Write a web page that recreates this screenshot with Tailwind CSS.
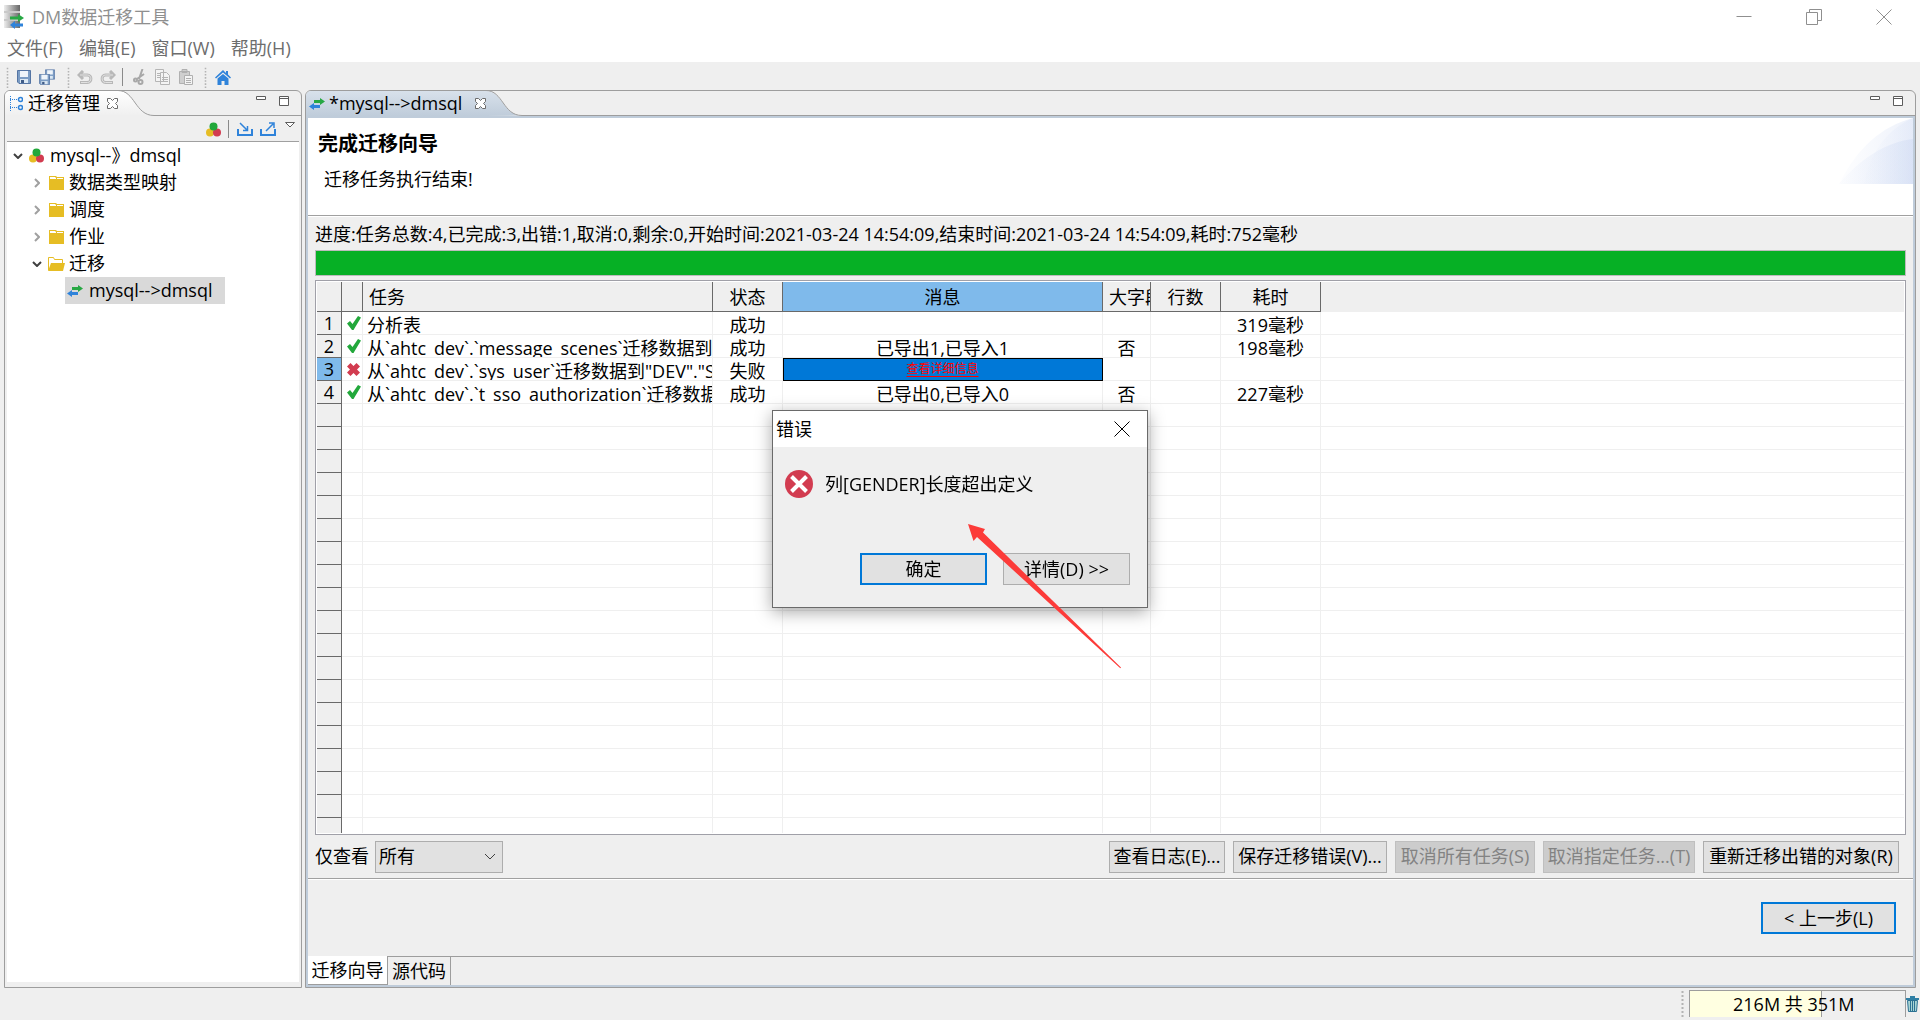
<!DOCTYPE html>
<html lang="zh-CN">
<head>
    <meta charset="UTF-8">
    <meta name="viewport" content="width=device-width, initial-scale=1.0">
    <title>DM数据迁移工具</title>
    <script src="https://cdn.jsdelivr.net/npm/@tailwindcss/browser@4"></script>
</head>
<body class="h-screen overflow-hidden flex flex-col bg-[#efefef] text-black text-[18px] leading-[27px] font-['Open_Sans','Noto_Sans_CJK_SC',sans-serif]">

    <!-- Shared icons -->
    <svg class="hidden" aria-hidden="true">
        <symbol id="i-swap" viewBox="0 0 16 12">
            <path d="M5 2h6V0l5 3.500-5 3.500V5H5z" fill="#27a844"/>
            <path d="M11 7H5V5L0 8.500 5 12v-2h6z" fill="#2f83da"/>
        </symbol>
        <symbol id="i-balls" viewBox="0 0 15 15">
            <circle cx="4" cy="10.500" r="4" fill="#e6bd24"/>
            <circle cx="11" cy="10.500" r="4" fill="#d23c50"/>
            <circle cx="7.500" cy="4.500" r="4" fill="#22a83b"/>
        </symbol>
        <symbol id="i-folder" viewBox="0 0 16 14">
            <path d="M0 0h7l1 1h7v13H0z" fill="#e6bd24"/>
            <path d="M1 1h5l1 1v1H1z" fill="#fff"/><path d="M8 2h6v1H8z" fill="#fff"/>
        </symbol>
        <symbol id="i-close" viewBox="0 0 11 11">
            <path d="M.5.500h3l2 2 2-2h3v3l-2 2 2 2v3h-3l-2-2-2 2h-3v-3l2-2-2-2z" fill="#fff" stroke="#6b6b6b"/>
        </symbol>
        <symbol id="i-min" viewBox="0 0 10 4"><path d="M.5.500h9v3h-9z" fill="#fff" stroke="#5c5c5c"/></symbol>
        <symbol id="i-max" viewBox="0 0 10 10"><path d="M.5.500h9v9h-9zM0 2.500h10" fill="#fff" stroke="#5c5c5c"/></symbol>
        <symbol id="i-ok" viewBox="0 0 14 14"><path d="M0 7.500 3 5l2.500 3L11 0l3 1.500L6.500 14H5z" fill="#22a83b"/></symbol>
        <symbol id="i-fail" viewBox="0 0 13 13"><path d="M3.500 0l3 3 3-3L13 3.500l-3 3 3 3L9.500 13l-3-3-3 3L0 9.500l3-3-3-3z" fill="#d23c50"/></symbol>
        <symbol id="i-x" viewBox="0 0 16 16"><path d="M.5.500l15 15M15.500.500l-15 15" fill="none" stroke="currentColor"/></symbol>
        <symbol id="i-right" viewBox="0 0 6 10"><path d="M1 1l4 4-4 4" fill="none" stroke="#a0a0a0" stroke-width="2"/></symbol>
        <symbol id="i-down" viewBox="0 0 10 6"><path d="M1 1l4 4 4-4" fill="none" stroke="#404040" stroke-width="2"/></symbol>
        <symbol id="i-grip" viewBox="0 0 3 27">
            <path d="M1.500 1v26" stroke="#b4b4b4" stroke-width="2" stroke-dasharray="2 2" fill="none"/>
        </symbol>
        <symbol id="i-floppy" viewBox="0 0 14 14">
            <path d="M.5.500h13v13H2l-1.500-1.500z" fill="#7b9cc4" stroke="#5474a3"/>
            <path d="M3 1h8v6H3z" fill="#eef4fa"/><path d="M3 9h8v4H3z" fill="#dbe8f3"/><path d="M4 10h3v3H4z" fill="#3f5c88"/>
        </symbol>
        <symbol id="i-undo" viewBox="0 0 16 15">
            <path d="M6 1 2 5l4 4M3 5h7.500c4.500 0 4.500 7.500 0 7.500H3" fill="none" stroke="#b8b8b8" stroke-width="3"/>
            <path d="M3 5h7.500c4.500 0 4.500 7.500 0 7.500H4" fill="none" stroke="#e2e2e2"/>
        </symbol>
    </svg>

    <!-- Title bar -->
    <header class="bg-white h-[62px] shrink-0">
        <div class="flex items-start justify-between h-[35px] pl-1 pr-7">
            <div class="flex items-center gap-2 h-[34px] text-[#8f8f8f]">
                <svg class="w-5 h-6" viewBox="0 0 20 24">
                    <defs><linearGradient id="db"><stop stop-color="#eee"/><stop offset="1" stop-color="#666"/></linearGradient></defs>
                    <path d="M0 0h16v6H0zM0 8h16v6H0zM0 16h16v7H0z" fill="url(#db)"/>
                    <path d="M0 6h16v2H0zM0 14h16v2H0z" fill="#c9c9c9"/>
                    <path d="M6 11.500h8V9l6 4-6 4v-2.500H6z" fill="#27a844"/>
                    <path d="M19 18.500h-8V16l-5 4 5 4v-2.500h8z" fill="#2f83da"/>
                </svg>
                <h1>DM数据迁移工具</h1>
            </div>
            <div class="flex text-[#8f8f8f] pt-[9px] gap-[54px]">
                <button aria-label="最小化" class="w-[16px] h-[16px]"><svg class="w-4 h-4" viewBox="0 0 16 16"><path d="M.5 7.500h15" stroke="currentColor"/></svg></button>
                <button aria-label="还原" class="w-[16px] h-[16px]"><svg class="w-4 h-4" viewBox="0 0 16 16"><path d="M.5 3.500h11v12h-11zM3.500 3.500v-3h12v11h-4" fill="none" stroke="currentColor"/></svg></button>
                <button aria-label="关闭" class="w-[16px] h-[16px]"><svg class="w-4 h-4"><use href="#i-x"/></svg></button>
            </div>
        </div>
        <nav class="flex gap-4 pl-[7px] text-[#6d6d6d]">
            <button>文件(F)</button>
            <button>编辑(E)</button>
            <button>窗口(W)</button>
            <button>帮助(H)</button>
        </nav>
    </header>

    <!-- Toolbar -->
    <div class="flex items-center h-7 shrink-0 pl-[6px] pt-[2px]">
        <svg class="w-[3px] h-[21px] mr-2"><use href="#i-grip"/></svg>
        <button aria-label="保存" class="mr-2"><svg class="w-[14px] h-[14px]"><use href="#i-floppy"/></svg></button>
        <button aria-label="全部保存" class="mr-3"><svg class="w-4 h-4" viewBox="0 0 16 16"><use href="#i-floppy" x="6" y="0" width="10" height="11"/><use href="#i-floppy" x="0" y="5" width="11" height="11"/></svg></button>
        <svg class="w-[3px] h-[21px] mr-[7px]"><use href="#i-grip"/></svg>
        <button aria-label="撤销" class="mr-[7px]" disabled><svg class="w-4 h-[15px]"><use href="#i-undo"/></svg></button>
        <button aria-label="重做" class="mr-[6px]" disabled><svg class="w-4 h-[15px] -scale-x-100"><use href="#i-undo"/></svg></button>
        <span class="w-px h-[18px] bg-[#8a8a8a] mr-[10px]"></span>
        <button aria-label="剪切" class="mr-[10px]" disabled>
            <svg class="w-3 h-4" viewBox="0 0 12 16" fill="none" stroke="#a8a8a8" stroke-width="2"><path d="M9.500 0 6 10M11 5 4 10"/><circle cx="2.500" cy="11" r="1.500"/><circle cx="7.500" cy="13" r="2"/></svg>
        </button>
        <button aria-label="复制" class="mr-[9px]" disabled>
            <svg class="w-[15px] h-4" viewBox="0 0 15 16" fill="#f4f4f4" stroke="#b5b5b5"><path d="M.5.500h8v12h-8zM5.500 3.500h6l3 3v9h-9z"/><path d="M2 4.500h3M2 6.500h3M2 8.500h3M7 8.500h6M7 10.500h6M7 12.500h6"/></svg>
        </button>
        <button aria-label="粘贴" class="mr-[11px]" disabled>
            <svg class="w-[14px] h-4" viewBox="0 0 14 16" fill="#cfcfcf" stroke="#b0b0b0"><path d="M.5 2.500h10v12H.5zM3 .500h5v3H3z"/><path d="M5.500 6.500h8v9h-8z" fill="#f4f4f4"/><path d="M7 9.500h5M7 11.500h5M7 13.500h5"/></svg>
        </button>
        <svg class="w-[3px] h-[21px] mr-2"><use href="#i-grip"/></svg>
        <button aria-label="主页">
            <svg class="w-4 h-[15px]" viewBox="0 0 16 15" fill="#2f83da"><path d="M8 0 0 7.500l1 1L8 2.500l7 6 1-1-3-3V1h-2v2z"/><path d="M8 4 2.500 8.500V15H6.500v-4h3v4h4V8.500z"/></svg>
        </button>
    </div>

    <div class="flex flex-1 min-h-0 gap-[3px] pl-1 pr-1">
        <!-- Migration explorer -->
        <aside class="flex flex-col w-[298px] shrink-0 border border-[#9d9d9d] rounded-t-[6px] overflow-hidden">
            <div class="flex h-[25px] shrink-0">
                <div class="flex items-center pl-[5px] gap-[5px] bg-linear-to-b from-white to-[#efefef]">
                    <svg class="w-[13px] h-[15px]" viewBox="0 0 13 15" fill="none" stroke="#2f83da"><path d="M.5 0v15M0 3.500h7M0 11.500h7" stroke-dasharray="1 1"/><circle cx="10.500" cy="3.500" r="2" stroke-width="1.500"/><circle cx="10.500" cy="11.500" r="2" stroke-width="1.500"/></svg>
                    <span>迁移管理</span>
                    <button aria-label="关闭视图" class="flex ml-[2px]"><svg class="w-[11px] h-[11px]"><use href="#i-close"/></svg></button>
                </div>
                <svg class="w-[36px] h-[25px] shrink-0" viewBox="0 0 36 25">
                    <defs><linearGradient id="tabL" x2="0" y2="1"><stop stop-color="#fff"/><stop offset="1" stop-color="#efefef"/></linearGradient></defs>
                    <path d="M0 0C17 0 17 24.500 36 24.500L0 25z" fill="url(#tabL)"/><path d="M0-.5C17-.5 17 24.500 36 24.500" fill="none" stroke="#9d9d9d"/>
                </svg>
                <div class="flex flex-1 justify-end gap-[13px] pr-3 pt-[5px] border-b border-[#9d9d9d]">
                    <button aria-label="最小化视图" class="h-1 flex"><svg class="w-[10px] h-1"><use href="#i-min"/></svg></button>
                    <button aria-label="最大化视图" class="h-[10px] flex"><svg class="w-[10px] h-[10px]"><use href="#i-max"/></svg></button>
                </div>
            </div>
            <div class="flex items-start justify-end h-[26px] shrink-0 mx-[2px] pr-1 pt-[6px] border-b border-[#a0a0a0]">
                <button aria-label="新建" class="mr-[7px]"><svg class="w-[15px] h-[15px]"><use href="#i-balls"/></svg></button>
                <span class="w-px h-[18px] -mt-[2px] bg-[#8a8a8a] mr-2"></span>
                <button aria-label="导入" class="mr-[7px]"><svg class="w-4 h-[14px]" viewBox="0 0 16 14" fill="none" stroke="#2f83da"><path d="M1 7v6h14V7" stroke-width="2"/><path d="M3 1l7 7M10.500 4v4.500H6" stroke-width="1.500"/></svg></button>
                <button aria-label="导出" class="mr-[9px]"><svg class="w-4 h-[14px]" viewBox="0 0 16 14" fill="none" stroke="#2f83da"><path d="M1 7v6h14V7" stroke-width="2"/><path d="M6 9l7-7M9 1h5v5" stroke-width="1.500"/></svg></button>
                <button aria-label="视图菜单" class="flex"><svg class="w-[10px] h-[6px]" viewBox="0 0 10 6"><path d="M.5.500h9L5 5z" fill="#fff" stroke="#5c5c5c"/></svg></button>
            </div>
            <ul class="flex-1 mx-[2px] mb-[5px] bg-white pl-[6px]">
                <li class="flex items-center h-[27px] gap-[6px]">
                    <svg class="w-[10px] h-[6px]"><use href="#i-down"/></svg>
                    <svg class="w-[15px] h-[15px]"><use href="#i-balls"/></svg><span>mysql--》dmsql</span>
                </li>
                <li class="flex items-center h-[27px] pl-[21px]"><svg class="w-[6px] h-[10px] mr-[9px]"><use href="#i-right"/></svg><svg class="w-4 h-[14px] mr-1"><use href="#i-folder"/></svg>数据类型映射</li>
                <li class="flex items-center h-[27px] pl-[21px]"><svg class="w-[6px] h-[10px] mr-[9px]"><use href="#i-right"/></svg><svg class="w-4 h-[14px] mr-1"><use href="#i-folder"/></svg>调度</li>
                <li class="flex items-center h-[27px] pl-[21px]"><svg class="w-[6px] h-[10px] mr-[9px]"><use href="#i-right"/></svg><svg class="w-4 h-[14px] mr-1"><use href="#i-folder"/></svg>作业</li>
                <li class="flex items-center h-[27px] pl-[19px]">
                    <svg class="w-[10px] h-[6px] mr-[6px]"><use href="#i-down"/></svg>
                    <svg class="w-[17px] h-[14px] mr-1" viewBox="0 0 17 14"><path d="M.5 13V.500h5l1 2h8V6" fill="none" stroke="#e6bd24"/><path d="M3 6h14l-2 8H0z" fill="#e6bd24"/></svg>迁移
                </li>
                <li class="flex h-[27px] pl-[52px]">
                    <span class="flex items-center gap-[6px] w-[160px] pl-[2px] bg-[#d9d9d9]"><svg class="w-4 h-3"><use href="#i-swap"/></svg>mysql--&gt;dmsql</span>
                </li>
            </ul>
        </aside>

        <!-- Editor -->
        <main class="flex flex-col flex-1 min-w-0 border border-[#9d9d9d] rounded-t-[6px] overflow-hidden">
            <div class="flex h-[25px] shrink-0">
                <div class="flex items-center w-[180px] pl-[3px] gap-1 bg-linear-to-b from-[#d8e1eb] to-[#bfccda]">
                    <svg class="w-4 h-3"><use href="#i-swap"/></svg>
                    <span>*mysql--&gt;dmsql</span>
                    <button aria-label="关闭编辑器" class="flex ml-auto"><svg class="w-[11px] h-[11px]"><use href="#i-close"/></svg></button>
                </div>
                <svg class="w-[36px] h-[25px] shrink-0" viewBox="0 0 36 25">
                    <defs><linearGradient id="tabR" x2="0" y2="1"><stop stop-color="#d8e1eb"/><stop offset="1" stop-color="#bfccda"/></linearGradient></defs>
                    <path d="M0 0C17 0 17 24.500 36 24.500L0 25z" fill="url(#tabR)"/><path d="M0-.5C17-.5 17 24.500 36 24.500" fill="none" stroke="#9d9d9d"/>
                </svg>
                <div class="flex flex-1 justify-end gap-[13px] pr-3 pt-[5px] border-b border-[#9d9d9d]">
                    <button aria-label="最小化编辑器" class="h-1 flex"><svg class="w-[10px] h-1"><use href="#i-min"/></svg></button>
                    <button aria-label="最大化编辑器" class="h-[10px] flex"><svg class="w-[10px] h-[10px]"><use href="#i-max"/></svg></button>
                </div>
            </div>

            <div class="flex flex-col flex-1 min-h-0 border-2 border-[#bfccda]">
                <section class="flex justify-between h-[98px] shrink-0 bg-white border-b border-[#a0a0a0]">
                    <div class="pl-[10px] pt-3">
                        <h2 class="text-[20px] font-bold">完成迁移向导</h2>
                        <p class="pl-[6px] pt-[9px]">迁移任务执行结束!</p>
                    </div>
                    <svg class="w-[76px] h-[66px]" viewBox="0 0 76 66">
                        <defs><linearGradient id="glow"><stop stop-color="#dbe4f7" stop-opacity=".1"/><stop offset="1" stop-color="#c9d6f2" stop-opacity=".7"/></linearGradient></defs>
                        <path d="M2 66C20 30 45 8 76 0v66z" fill="url(#glow)" opacity=".5"/>
                        <path d="M27 66C32 38 48 12 76 0v66z" fill="url(#glow)" opacity=".3"/>
                        <path d="M2 66C22 42 48 24 76 21v45z" fill="url(#glow)" opacity=".6"/>
                    </svg>
                </section>

                <section class="flex flex-col flex-1 min-h-0 pl-[7px] pr-[7px] border-t border-white">
                    <p class="h-[33px] pt-[4px] shrink-0 whitespace-nowrap">进度:任务总数:4,已完成:3,出错:1,取消:0,剩余:0,开始时间:2021-03-24 14:54:09,结束时间:2021-03-24 14:54:09,耗时:752毫秒</p>
                    <div role="progressbar" aria-valuenow="100" class="h-[26px] shrink-0 bg-[#06b025] border border-[#bcbcbc]"></div>

                    <div class="flex-1 min-h-0 mt-1 overflow-hidden bg-white border border-[#a0a0a8] p-px">
                        <div class="h-full overflow-hidden">
                        <table class="w-full table-fixed border-separate border-spacing-0 [&_td]:h-[23px] [&_td]:p-0 [&_td]:border-r [&_td]:border-b [&_td]:border-[#efefef] [&_td>div]:h-[22px] [&_td>div]:leading-[26px] [&_td>div]:overflow-hidden [&_td>div]:whitespace-nowrap [&_td:last-child]:border-r-0">
                            <colgroup>
                                <col class="w-[25px]"><col class="w-[21px]"><col class="w-[350px]"><col class="w-[70px]"><col class="w-[320px]"><col class="w-[48px]"><col class="w-[70px]"><col class="w-[100px]"><col>
                            </colgroup>
                            <thead>
                                <tr class="h-[30px] bg-[#efefef] [&_th]:px-0 [&_th]:pt-[2px] [&_th]:pb-0 [&_th]:font-normal [&_th]:border-r [&_th]:border-b [&_th]:border-[#696969] [&_th]:whitespace-nowrap [&_th]:overflow-hidden">
                                    <th></th><th></th>
                                    <th class="text-left"><div class="pl-[6px]">任务</div></th>
                                    <th>状态</th>
                                    <th class="bg-[#7fbaeb]">消息</th>
                                    <th class="text-left"><div class="pl-[6px]">大字段</div></th>
                                    <th>行数</th>
                                    <th>耗时</th>
                                    <td></td>
                                </tr>
                            </thead>
                            <tbody id="rows" class="text-center [&_th]:p-0 [&_th]:h-[23px] [&_th]:font-normal [&_th]:leading-[22px] [&_th]:bg-[#efefef] [&_th]:border-r [&_th]:border-b [&_th]:border-[#696969]">
                                <tr>
                                    <th>1</th><td><svg class="w-[14px] h-[14px] ml-[5px]"><use href="#i-ok"/></svg></td>
                                    <td class="text-left"><div class="pl-1">分析表</div></td><td><div>成功</div></td><td></td><td></td><td></td><td><div>319毫秒</div></td><td></td>
                                </tr>
                                <tr>
                                    <th>2</th><td><svg class="w-[14px] h-[14px] ml-[5px]"><use href="#i-ok"/></svg></td>
                                    <td class="text-left"><div class="pl-1">从`ahtc_dev`.`message_scenes`迁移数据到"DEV"."MESSAGE_SCENES"</div></td><td><div>成功</div></td><td><div>已导出1,已导入1</div></td><td><div>否</div></td><td></td><td><div>198毫秒</div></td><td></td>
                                </tr>
                                <tr>
                                    <th class="!bg-[#7fbaeb]">3</th><td><svg class="w-[13px] h-[13px] ml-[5px]"><use href="#i-fail"/></svg></td>
                                    <td class="text-left"><div class="pl-1">从`ahtc_dev`.`sys_user`迁移数据到"DEV"."SYS_USER"</div></td><td><div>失败</div></td>
                                    <td class="bg-[#0078d7] outline outline-black -outline-offset-1"><a href="#" class="block h-[22px] text-[12px] leading-[21px] text-[#f00] underline underline-offset-3">查看详细信息</a></td><td></td><td></td><td></td><td></td>
                                </tr>
                                <tr>
                                    <th>4</th><td><svg class="w-[14px] h-[14px] ml-[5px]"><use href="#i-ok"/></svg></td>
                                    <td class="text-left"><div class="pl-1">从`ahtc_dev`.`t_sso_authorization`迁移数据到"DEV"."T_SSO_AUTHORIZATION"</div></td><td><div>成功</div></td><td><div>已导出0,已导入0</div></td><td><div>否</div></td><td></td><td><div>227毫秒</div></td><td></td>
                                </tr>
                            </tbody>
                        </table>
                        </div>
                    </div>

                    <div class="flex items-center justify-between shrink-0 h-[43px] pr-[7px] whitespace-nowrap">
                        <div class="flex items-center gap-[6px]">
                            <label for="filter">仅查看</label>
                            <div class="relative">
                                <select id="filter" class="appearance-none w-32 h-8 pl-[3px] bg-[#e1e1e1] border border-[#adadad]"><option>所有</option></select>
                                <svg class="absolute right-[7px] top-[12px] w-3 h-[7px] pointer-events-none" viewBox="0 0 12 7"><path d="M1 1l5 5 5-5" fill="none" stroke="#404040"/></svg>
                            </div>
                        </div>
                        <div class="flex gap-2">
                            <button class="w-[116px] h-8 bg-[#e1e1e1] border border-[#adadad]">查看日志(E)...</button>
                            <button class="w-[154px] h-8 bg-[#e1e1e1] border border-[#adadad]">保存迁移错误(V)...</button>
                            <button disabled class="w-[140px] h-8 bg-[#cccccc] border border-[#bfbfbf] text-[#838383]">取消所有任务(S)</button>
                            <button disabled class="w-[152px] h-8 bg-[#cccccc] border border-[#bfbfbf] text-[#838383]">取消指定任务...(T)</button>
                            <button class="w-[196px] h-8 bg-[#e1e1e1] border border-[#adadad]">重新迁移出错的对象(R)</button>
                        </div>
                    </div>
                </section>

                <div class="flex items-start justify-end shrink-0 h-[78px] pt-[23px] pr-[17px] border-t border-[#a0a0a0] shadow-[inset_0_1px_0_#fff]">
                    <button class="w-[135px] h-8 bg-[#e1e1e1] border-2 border-[#0078d7]">&lt; 上一步(L)</button>
                </div>

                <div class="flex shrink-0 h-[29px] leading-7">
                    <button class="w-[79px] bg-white border-b border-[#9d9d9d]">迁移向导</button>
                    <button class="px-1 border-x border-t border-[#9d9d9d]">源代码</button>
                    <div class="flex-1 border-t border-[#9d9d9d]"></div>
                </div>
            </div>
        </main>
    </div>

    <!-- Status bar -->
    <footer class="flex items-start justify-end shrink-0 h-8 pt-[2px]">
        <svg class="w-[3px] h-[27px] mr-[5px]"><use href="#i-grip"/></svg>
        <div class="w-[217px] h-[27px] border-x border-t border-[#9d9d9d] bg-linear-to-r from-[#ffffe1] from-[132px] to-[#efefef] to-[132px]">
            <div class="w-[132px] h-full border-r border-[#9d9d9d] pl-[43px] leading-[27px] whitespace-nowrap">216M 共 351M</div>
        </div>
        <button aria-label="垃圾回收" class="mt-[6px] mr-px">
            <svg class="w-[13px] h-4" viewBox="0 0 13 16"><path d="M1.500 4.500h10l-1 11h-8z" fill="#a9d4d4" stroke="#2b7193"/><path d="M4.500 5v10M6.500 5v10M8.500 5v10" stroke="#2b7193"/><path d="M0 2h13v2H0zM4 0h5v2H4z" fill="#2f7fa5"/></svg>
        </button>
    </footer>

    <!-- Error dialog -->
    <div class="fixed inset-0 flex items-center justify-center pb-[2px]">
        <div role="dialog" aria-labelledby="dlgTitle" class="relative flex flex-col w-[376px] h-[198px] bg-[#efefef] border border-[#6a6a6a] shadow-[0_4px_16px_rgba(0,0,0,0.35)]">
            <div class="flex items-center justify-between h-9 shrink-0 pl-[3px] pr-[17px] bg-white">
                <h3 id="dlgTitle">错误</h3>
                <button aria-label="关闭"><svg class="w-4 h-4"><use href="#i-x"/></svg></button>
            </div>
            <div class="flex items-center gap-3 pl-3 pt-[23px]">
                <svg class="w-7 h-7" viewBox="0 0 28 28"><circle cx="14" cy="14" r="14" fill="#d23c50"/><path d="M6.500 6.500l15 15M21.500 6.500l-15 15" stroke="#fff" stroke-width="4"/></svg>
                <p>列[GENDER]长度超出定义</p>
            </div>
            <div class="flex justify-end gap-4 mt-auto pr-[17px] pb-[22px]">
                <button class="w-[127px] h-8 bg-[#e1e1e1] border-2 border-[#0078d7]">确定</button>
                <button class="w-[127px] h-8 bg-[#e1e1e1] border border-[#adadad]">详情(D) &gt;&gt;</button>
            </div>
            <svg class="absolute left-[195px] top-[113px] w-[153px] h-[144px] overflow-visible pointer-events-none" viewBox="0 0 153 144"><path d="M0 0l17 5-2 3.500 138 135-.7.700L9 13l-3.500 4z" fill="#fc3b39"/></svg>
        </div>
    </div>

    <script>
        // fill the rest of the grid with blank lines
        const rows = document.getElementById('rows');
        for (let i = 0; i < 19; i++) {
            rows.innerHTML += '<tr><th></th><td></td><td></td><td></td><td></td><td></td><td></td><td></td><td></td></tr>';
        }
    </script>
</body>
</html>
